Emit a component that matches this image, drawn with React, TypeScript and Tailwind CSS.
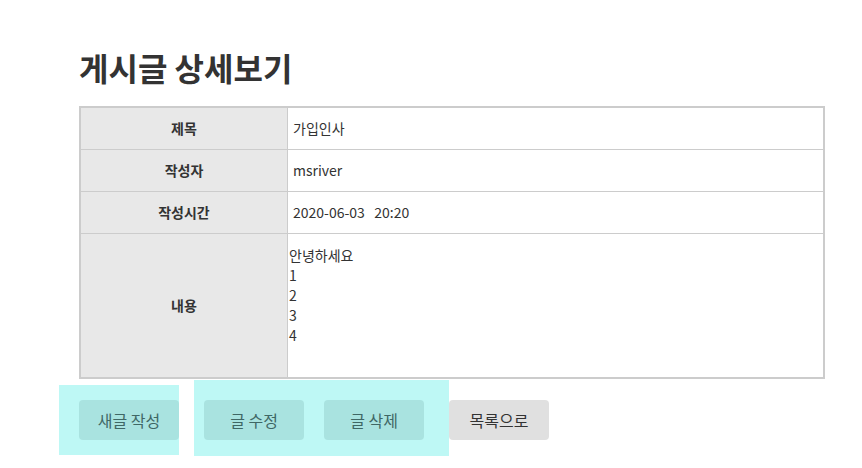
import React from "react";

const font = { fontFamily: '"Noto Sans CJK KR", "Noto Sans", sans-serif' };

function Row({ label, children, h }: { label: string; children: React.ReactNode; h: string }) {
  return (
    <div className={`flex border-b border-[#cccccc] last:border-b-0 ${h}`}>
      <div className="w-[207px] shrink-0 bg-[#e8e8e8] border-r border-[#cccccc] flex items-center justify-center text-[14px] font-bold text-[#333333]">
        {label}
      </div>
      {children}
    </div>
  );
}

export default function App() {
  return (
    <div style={font} className="w-[862px] h-[468px] bg-white text-[#333333] pl-[79px] pt-[45px]">
      <h2 className="text-[32px] leading-[44px] font-bold text-[#333333] m-0">게시글 상세보기</h2>
      <div className="mt-[17px] w-[746px] border-2 border-[#cccccc]">
        <Row label="제목" h="h-[42px]">
          <div className="flex items-center pl-[5px] text-[14px]">가입인사</div>
        </Row>
        <Row label="작성자" h="h-[42px]">
          <div className="flex items-center pl-[5px] text-[14px]">msriver</div>
        </Row>
        <Row label="작성시간" h="h-[42px]">
          <div className="flex items-center pl-[5px] text-[14px] whitespace-pre">2020-06-03   20:20</div>
        </Row>
        <Row label="내용" h="h-[143px]">
          <div className="pt-[11px] pl-px text-[14px] leading-[20px] whitespace-pre-line">
            {"안녕하세요\n1\n2\n3\n4"}
          </div>
        </Row>
      </div>
      <div className="flex items-start ml-[-20px] mt-px">
        <div className="bg-[#bef8f5] mt-[5px] pl-[20px] py-[15px]">
          <button className="w-[100px] h-[40px] rounded-[4px] bg-[#a9e3e0] text-[16px] text-[#3f6765]">새글 작성</button>
        </div>
        <div className="bg-[#bef8f5] ml-[15px] pl-[10px] pr-[25px] pt-[20px] pb-[16px] flex gap-[20px]">
          <button className="w-[100px] h-[40px] rounded-[4px] bg-[#a9e3e0] text-[16px] text-[#3f6765]">글 수정</button>
          <button className="w-[100px] h-[40px] rounded-[4px] bg-[#a9e3e0] text-[16px] text-[#3f6765]">글 삭제</button>
        </div>
        <button className="mt-[20px] w-[100px] h-[40px] rounded-[4px] bg-[#e0e0e0] text-[16px] text-[#333333]">목록으로</button>
      </div>
    </div>
  );
}
